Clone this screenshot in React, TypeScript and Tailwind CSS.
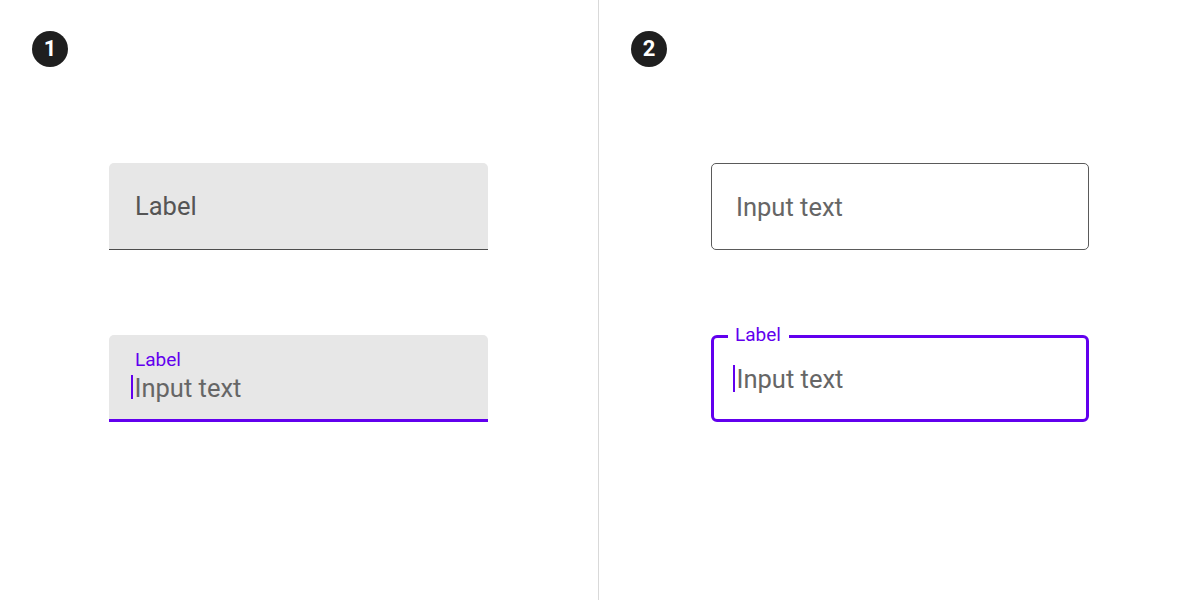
import React from "react";

const Badge: React.FC<{ n: string }> = ({ n }) => (
  <div className="w-[36px] h-[36px] rounded-full bg-[#1f1f1f] flex items-center justify-center text-white text-[22px] font-bold leading-none">
    {n}
  </div>
);

export default function App() {
  return (
    <div
      className="w-[1200px] h-[600px] flex bg-white overflow-hidden"
      style={{ fontFamily: "Roboto, 'Noto Sans', sans-serif" }}
    >
      {/* filled text fields */}
      <div className="w-[598px] flex flex-col pt-[31px] pl-[32px]">
        <Badge n="1" />
        <div className="ml-[77px] mt-[96px] w-[379px] flex flex-col gap-[85px]">
          <div className="h-[87px] bg-[#e7e7e7] rounded-t-[5px] border-b border-[#4d4d4d] flex items-center pl-[26px]">
            <span className="text-[25.5px] leading-[30px] text-[#555555]">Label</span>
          </div>
          <div className="h-[87px] bg-[#e7e7e7] rounded-t-[5px] border-b-[3px] border-[#6200ee] flex flex-col pt-[14px]">
            <span className="pl-[26px] text-[19px] leading-[22px] text-[#6200ee]">Label</span>
            <div className="pl-[22px] flex items-start mt-[2px] h-[30px]">
              <div className="w-[1.5px] h-[24px] mt-[2px] bg-[#6200ee] shrink-0" />
              <span className="ml-[2px] text-[25.5px] leading-[30px] text-[#666666]">Input text</span>
            </div>
          </div>
        </div>
      </div>

      <div className="w-px h-full bg-[#d9d9d9]" />

      {/* outlined text fields */}
      <div className="flex-1 flex flex-col pt-[31px] pl-[32px]">
        <Badge n="2" />
        <div className="ml-[80px] mt-[96px] w-[378px] flex flex-col gap-[85px]">
          <div className="h-[87px] border border-[#5a5a5a] rounded-[5px] flex items-center pl-[24px]">
            <span className="text-[25.5px] leading-[30px] text-[#666666]">Input text</span>
          </div>
          <div className="relative h-[87px] border-[3px] border-[#6200ee] rounded-[6px] flex items-center pl-[19px]">
            <span className="absolute -top-[14px] left-[14px] pl-[7px] pr-[8px] bg-white text-[19px] leading-[22px] text-[#6200ee]">
              Label
            </span>
            <div className="w-[1.5px] h-[27px] bg-[#6200ee] shrink-0" />
            <span className="ml-[2px] text-[25.5px] leading-[30px] text-[#666666]">Input text</span>
          </div>
        </div>
      </div>
    </div>
  );
}
